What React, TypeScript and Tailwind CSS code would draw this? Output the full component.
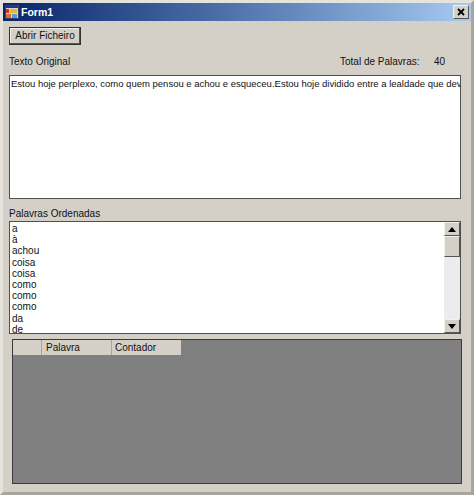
const WORDS = ['a', 'à', 'achou', 'coisa', 'coisa', 'como', 'como', 'como', 'da', 'de'];

function FormIcon() {
  return (
    <svg width="14" height="14" viewBox="0 0 14 14" className="shrink-0">
      <rect x="0.5" y="0.5" width="13" height="13" fill="#d8d4cc" stroke="#39406b" />
      <rect x="1" y="1" width="12" height="2" fill="#20357f" />
      <rect x="1" y="4" width="3" height="4" fill="#c8342c" />
      <rect x="5" y="4" width="7" height="4" fill="#e8b83a" />
      <rect x="1" y="9" width="5" height="4" fill="#d8702c" />
      <rect x="7" y="9" width="5" height="4" fill="#5a9ad8" />
    </svg>
  );
}

function Arrow({ down }: { down?: boolean }) {
  return (
    <svg width="8" height="5" viewBox="0 0 8 5">
      <path d={down ? 'M0 0H8L4 5Z' : 'M4 0L8 5H0Z'} fill="#000" />
    </svg>
  );
}

const raised = 'border border-t-[#f4f2ee] border-l-[#f4f2ee] border-r-[#555] border-b-[#555] bg-[#d4d0c8]';

export default function App() {
  return (
    <div className="w-[474px] h-[495px] overflow-hidden bg-[#d4d0c8] text-[10px] leading-[13px] text-[#111] font-['Liberation_Sans',Arial,sans-serif] border-[3px] border-t-[#e6e3dc] border-l-[#e6e3dc] border-r-[#a8a59e] border-b-[#a8a59e] flex flex-col">
      <div className="h-[18px] shrink-0 flex items-center pl-[2px] pr-[2px] gap-[2px] bg-gradient-to-r from-[#0a246a] to-[#a6caf0]">
        <FormIcon />
        <span className="flex-1 text-white font-bold text-[10.5px]">Form1</span>
        <div className={`w-[16px] h-[14px] flex items-center justify-center ${raised}`}>
          <svg width="8" height="8" viewBox="0 0 8 8">
            <path d="M1 1L7 7M7 1L1 7" stroke="#000" strokeWidth="1.8" />
          </svg>
        </div>
      </div>

      <div className="flex-1 flex flex-col pl-[6px] pr-[10px]">
        <button className="mt-[6px] w-[72px] h-[18px] shrink-0 border border-[#333] shadow-[inset_-1px_-1px_0_#555,inset_1px_1px_0_#f4f2ee] bg-[#d4d0c8] text-[10px] leading-none text-[#111]">
          Abrir Ficheiro
        </button>

        <div className="mt-[10px] h-[13px] flex">
          <span className="flex-1">Texto Original</span>
          <span className="w-[94px]">Total de Palavras:</span>
          <span className="w-[27px]">40</span>
        </div>

        <div className="mt-[7px] h-[124px] shrink-0 w-[452px] border border-[#505050] bg-white px-[1px] py-[1px] overflow-hidden whitespace-nowrap text-[9.5px]">
          Estou hoje perplexo, como quem pensou e achou e esqueceu.Estou hoje dividido entre a lealdade que devo
        </div>

        <div className="mt-[8px] h-[13px]">Palavras Ordenadas</div>

        <div className="mt-[1px] h-[113px] shrink-0 w-[452px] border border-[#505050] bg-white flex overflow-hidden">
          <div className="flex-1 pl-[2px] pt-[1px]">
            {WORDS.map((w, i) => (
              <div key={i} className="h-[11.2px] leading-[11px]">{w}</div>
            ))}
          </div>
          <div className="w-[16px] flex flex-col bg-[#ececec]">
            <div className={`h-[14px] flex items-center justify-center ${raised}`}>
              <Arrow />
            </div>
            <div className={`h-[21px] ${raised}`} />
            <div className="flex-1" />
            <div className={`h-[14px] flex items-center justify-center ${raised}`}>
              <Arrow down />
            </div>
          </div>
        </div>

        <div className="mt-[5px] ml-[3px] h-[145px] shrink-0 w-[450px] border border-[#3a3a3a] bg-[#808080]">
          <div className="flex h-[15px] leading-[15px]">
            <div className="w-[29px] bg-[#d4d0c8] border-r border-[#a8a59e]" />
            <div className="w-[70px] pl-[4px] bg-[#d4d0c8] border-r border-[#a8a59e]">Palavra</div>
            <div className="w-[69px] pl-[3px] bg-[#d4d0c8]">Contador</div>
          </div>
        </div>
      </div>
    </div>
  );
}
